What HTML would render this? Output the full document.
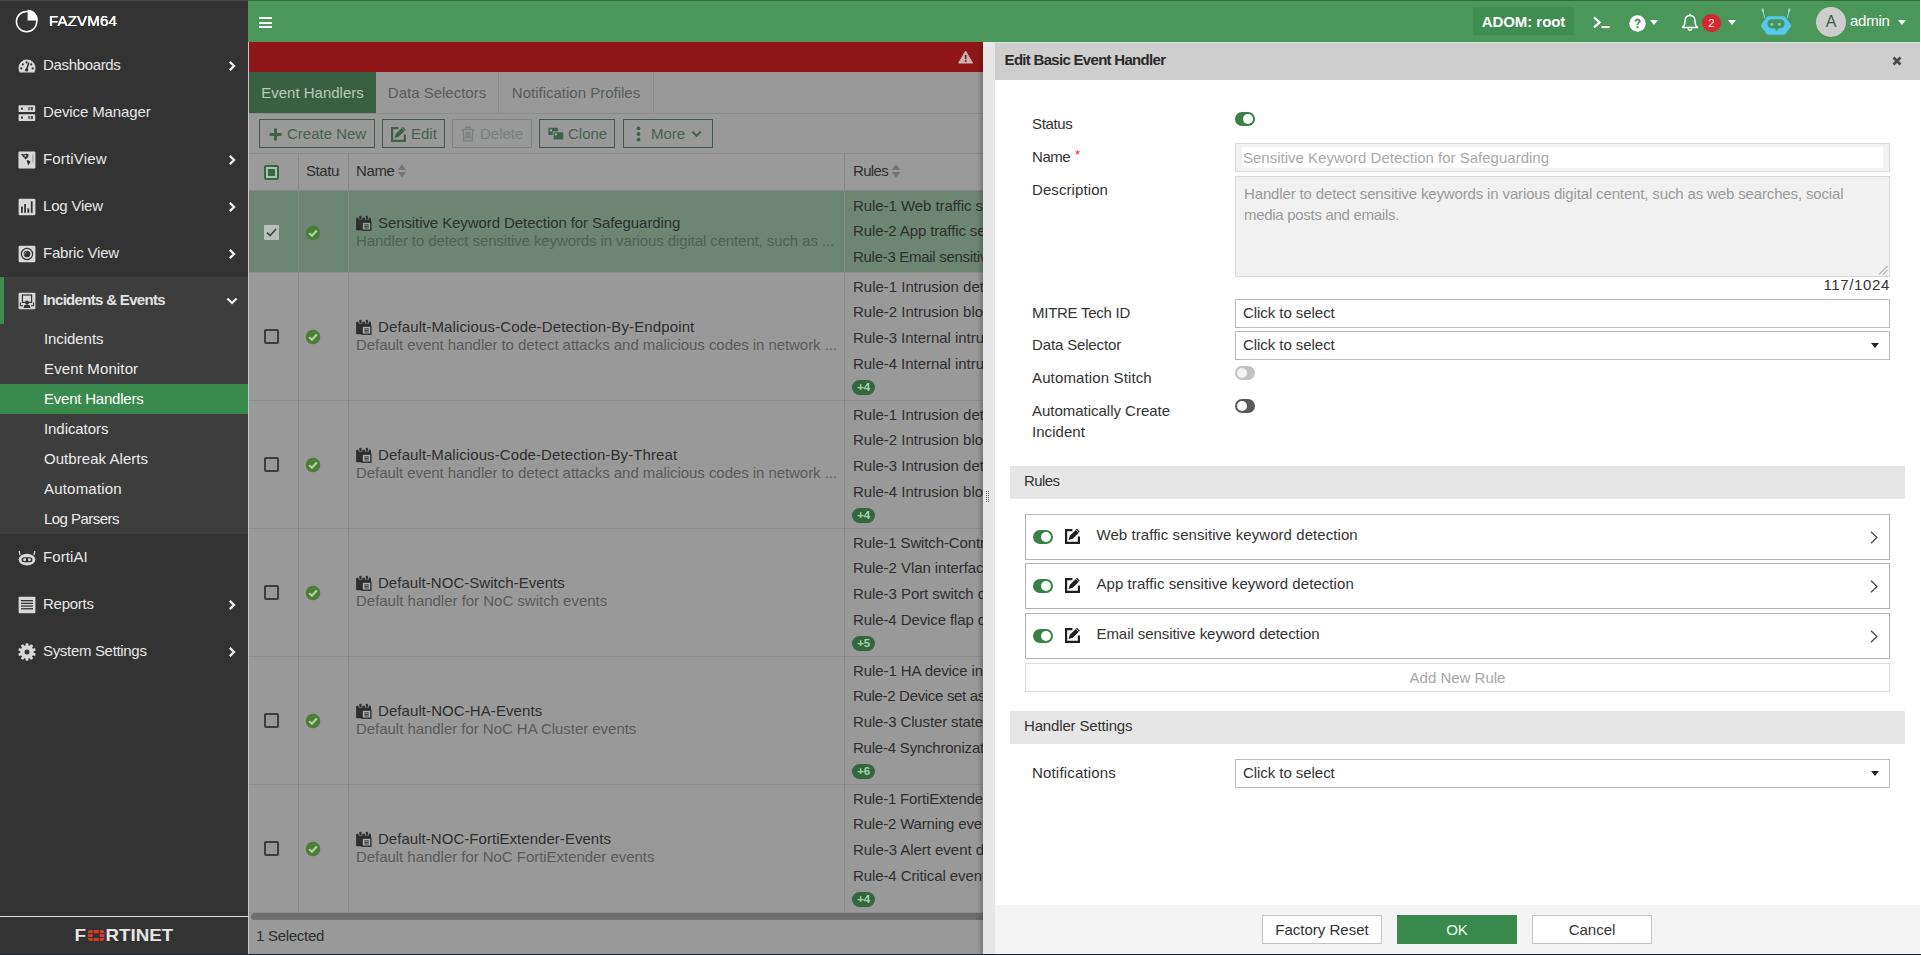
<!DOCTYPE html>
<html lang="en">
<head>
<meta charset="utf-8">
<title>FortiAnalyzer - Edit Basic Event Handler</title>
<style>
*{box-sizing:border-box;margin:0;padding:0}
html,body{width:1921px;height:955px;overflow:hidden;background:#fff}
body{font-family:"Liberation Sans",sans-serif;font-size:15px;color:#333;position:relative}
.abs{position:absolute}
.lato{font-family:"Liberation Sans",sans-serif;letter-spacing:-0.35px}
svg{display:block}

/* ---------- sidebar ---------- */
#side{position:absolute;left:0;top:0;width:248px;height:955px;background:#333333;color:#ededed}
#side .brand{position:absolute;left:0;top:0;width:248px;height:42px}
#side .brand .t{position:absolute;left:49px;top:11px;font-size:15px;line-height:20px;color:#fff;letter-spacing:0.19px;font-weight:400;text-shadow:0 0 .5px #fff,0 0 .5px #fff}
.mi{position:absolute;left:0;width:248px;height:47px}
.mi .ic{position:absolute;left:17.6px;top:15.4px;width:18px;height:18px}
.mi .t{position:absolute;left:43px;top:14px;font-size:15px;line-height:18px;color:#e6e6e6;letter-spacing:-0.45px;white-space:nowrap}
.mi .ch{position:absolute;left:227px;top:18px;width:10px;height:12px}
.mi.act{background:#3d3d3d}
.mi.act:before{content:"";position:absolute;left:0;top:0;width:4px;height:47px;background:#3d8b4f}
.mi.act .t{font-weight:bold;letter-spacing:-0.75px;color:#e2e2e2}
#sub{position:absolute;left:0;top:324px;width:248px;height:210px;background:#3d3d3d}
.si{position:absolute;left:0;width:248px;height:30px}
.si .t{position:absolute;left:44px;top:6px;font-size:15px;line-height:18px;color:#ececec;letter-spacing:-0.45px;white-space:nowrap}
.si.act{background:#3a8a4d}
.si.act .t{color:#fff}
#sfoot{position:absolute;left:0;top:916px;width:248px;height:39px;border-top:1px solid #dcdcdc;background:#333}

/* ---------- top bar ---------- */
#top{position:absolute;left:248px;top:0;width:1672px;height:42px;background:#4b9659}
#topline{position:absolute;left:0;top:0;width:1921px;height:1px;background:linear-gradient(90deg,#474747 0,#474747 248px,#2f6a3e 248px,#2f6a3e 1920px,#fff 1920px)}


#top .ham{position:absolute;left:11px;top:16px;width:13px;height:12px}
#top .ham i{position:absolute;left:0;width:13px;height:2.2px;background:#fff;border-radius:.5px}
#adom{position:absolute;left:1225px;top:7px;width:101px;height:28px;background:#408d51;color:#fff;font-weight:bold;font-size:15px;line-height:29.5px;text-align:center;letter-spacing:-0.06px}
#top .user{position:absolute;left:1602px;top:12px;font-size:15px;line-height:18px;color:#fff;letter-spacing:-0.23px}
#top .av{position:absolute;left:1568px;top:7px;width:30px;height:30px;border-radius:50%;background:#cdcdcd;color:#3c5c45;font-size:16px;line-height:30px;text-align:center}
#top .bdg{position:absolute;left:1454px;top:14px;width:19px;height:18px;border-radius:9px;background:#d9272e;color:#fff;font-size:11.5px;line-height:18px;text-align:center}
.car{position:absolute;width:0;height:0;border-left:4.6px solid transparent;border-right:4.6px solid transparent;border-top:5px solid #fff}

/* ---------- dimmed main ---------- */
#main{position:absolute;left:248px;top:42px;width:735px;height:913px;background:#999999;overflow:hidden}
#banner{position:absolute;left:1px;top:0;width:734px;height:30px;background:#8f1616}

#main .edge{position:absolute;left:0;top:0;width:1px;height:913px;background:rgba(255,255,255,.45)}
#warn{position:absolute;left:709.8px;top:8.2px;width:15.2px;height:14.2px}
#tabs{position:absolute;left:1px;top:30px;width:734px;height:42px;border-bottom:1px solid #8b8b8b}
.tab{position:absolute;top:0;height:41px;font-size:15px;line-height:41px;color:#585d5a;text-align:center;border-right:1px solid #8b8b8b;white-space:nowrap}
.tab.on{background:#396043;color:#b6ccba;border-right:none}
.btn{position:absolute;top:77px;height:29px;border:1px solid #425a49;color:#48614f;font-size:15px;line-height:27px;white-space:nowrap}
.btn span{position:absolute;top:0}
.btn.dis{border-color:#7f8481;color:#7b817d}
.btn svg{position:absolute}
#thead{position:absolute;left:1px;top:111px;width:734px;height:38px;border-top:1px solid #8a8a8a;border-bottom:1px solid #878787;background:#9a9a9a}
.vl{position:absolute;top:111px;width:1px;height:760px;background:#888}
.th{position:absolute;top:8px;font-size:15px;line-height:18px;color:#2d2d2d;white-space:nowrap}
.sort{position:absolute;margin-left:-1.5px;top:10px;width:10px;height:14px}
.row{position:absolute;left:1px;width:734px;border-bottom:1px solid #8c8c8c}
.row.sel{background:#6d8674;border-bottom-color:#8a918c}
.cb{position:absolute;left:15px;width:15px;height:15px;border:2px solid #3c3c3c;border-radius:2px}
.st{position:absolute;left:56.3px;width:16px;height:16px}
.nm{position:absolute;left:129px;font-size:15px;line-height:18px;color:#2f2f2f;white-space:nowrap}
.ds{position:absolute;left:107px;font-size:15px;line-height:18px;color:#5b5b5b;white-space:nowrap}
.row.sel .ds{color:#4c6354}
.hi{position:absolute;left:107px;width:16px;height:16px}
.rl{position:absolute;left:604px;font-size:15px;line-height:18px;color:#2f2f2f;white-space:nowrap}
.pb{position:absolute;left:603px;width:23px;height:15px;border-radius:8px;background:#33683f;color:#a9cdb1;font-size:11.5px;font-weight:bold;line-height:15px;text-align:center;letter-spacing:-0.4px}
#hsb{position:absolute;left:3px;top:871px;width:740px;height:7px;border-radius:4px;background:#6e6e6e}
#selc{position:absolute;left:8px;top:885px;font-size:15px;line-height:18px;color:#303030;letter-spacing:-0.29px}

/* ---------- panel ---------- */
#grip{position:absolute;left:983px;top:42px;width:12px;height:913px;background:#e7e7e7;box-shadow:-2px 0 5px rgba(0,0,0,.28);clip-path:inset(0 0 0 -10px)}
#panel{position:absolute;left:995px;top:42px;width:925px;height:913px;background:#fff}
#phead{position:absolute;left:0;top:0;width:925px;height:38px;background:#cecece;border-top:1px solid #d6e6d9}
#pfoot{position:absolute;left:0;top:863px;width:925px;height:50px;background:#f4f4f4}

#grip .dots{position:absolute;left:3px;top:449px;width:3px;height:11px}
#ptitle{position:absolute;left:9.6px;top:8px;font-size:15px;line-height:18px;font-weight:bold;color:#2b2b2b;white-space:nowrap}
#pclose{position:absolute;left:896.5px;top:13px;width:10px;height:10px}
.lb{position:absolute;left:37px;font-size:15px;line-height:21px;color:#333;white-space:nowrap}
.tg{position:absolute;left:240px;width:20px;height:14px;border-radius:7px}
.tg i{position:absolute;top:1.8px;width:10.4px;height:10.4px;border-radius:50%;background:#fff}
.tg.on{background:#3a8148}.tg.on i{left:7.8px}
.tg.off{background:#5a5a5a}.tg.off i{left:1.6px}
.tg.dis{background:#c2c2c2}.tg.dis i{left:1.6px;background:#f2f2f2}
.fld{position:absolute;left:240px;width:655px;height:29px;border:1px solid #bcbcbc;background:#fff;font-size:15px;line-height:25px;color:#333;padding-left:7px;white-space:nowrap}
.fld .dn{position:absolute;right:10px;top:11px;width:0;height:0;border-left:4.5px solid transparent;border-right:4.5px solid transparent;border-top:5px solid #222}
.sec{position:absolute;left:15px;width:895px;height:33px;background:#e6e6e6;font-size:15px;line-height:29px;color:#333;padding-left:14px}
.rule{position:absolute;left:30px;width:865px;height:46px;border:1px solid #b4b4b4;background:#fff}
.rule .tg{left:7px;top:15px}
.rule .ed{position:absolute;left:39px;top:14.2px;width:15px;height:15px}
.rule .rt{position:absolute;left:70.5px;top:11px;font-size:15px;line-height:18px;color:#333;white-space:nowrap}
.rule .go{position:absolute;left:844px;top:15.5px;width:8px;height:13px}
.pbtn{position:absolute;top:873px;width:120px;height:29px;border:1px solid #c4c4c4;background:#fff;font-size:15px;line-height:27px;text-align:center;color:#333}
.pbtn.ok{background:#3a8a4d;border-color:#3a8a4d;color:#e9f6ec}
#botline{position:absolute;left:0;top:954px;width:1921px;height:1px;background:#1c262d}
</style>
</head>
<body>

<!-- ================= SIDEBAR ================= -->
<div id="side">
  <div class="brand"><svg class="abs" style="left:15px;top:9px;width:24px;height:24px" viewBox="0 0 24 24"><circle cx="11.6" cy="12.6" r="10.2" fill="none" stroke="#fff" stroke-width="1.5"/><path d="M12.6 0.8 A10.6 10.6 0 0 1 23.2 11.4 L12.6 11.4 Z" fill="#fff"/></svg><span class="t">FAZVM64</span></div>
  <div class="mi" style="top:42px"><svg class="ic" viewBox="0 0 18 18"><path d="M9 2.6 A8.5 8.5 0 0 0 0.5 11.1 C0.5 12.7 0.9 14.2 1.7 15.4 L16.3 15.4 C17.1 14.2 17.5 12.7 17.5 11.1 A8.5 8.5 0 0 0 9 2.6 Z" fill="#d8d8d8"/><circle cx="3.3" cy="11.4" r="1.05" fill="#333"/><circle cx="4.8" cy="7.4" r="1.05" fill="#333"/><circle cx="8.6" cy="5.4" r="1.05" fill="#333"/><circle cx="13.2" cy="7.4" r="1.05" fill="#333"/><circle cx="14.7" cy="11.4" r="1.05" fill="#333"/><path d="M8.6 12.8 L10.6 6.2" stroke="#333" stroke-width="1.5" stroke-linecap="round"/><circle cx="8.6" cy="12.9" r="1.7" fill="#333"/></svg><span class="t" style="letter-spacing:-0.34px">Dashboards</span><svg class="ch" viewBox="0 0 10 12"><path d="M2.8 1.9 L7 6 L2.8 10.1" fill="none" stroke="#f0f0f0" stroke-width="2.3" stroke-linejoin="miter"/></svg></div>
  <div class="mi" style="top:89px"><svg class="ic" viewBox="0 0 18 18"><rect x="0.6" y="1.2" width="16.6" height="6.8" rx="0.8" fill="#d8d8d8"/><rect x="0.6" y="10.2" width="16.6" height="6.8" rx="0.8" fill="#d8d8d8"/><rect x="3" y="3.6" width="2" height="2" fill="#333"/><rect x="3" y="12.6" width="2" height="2" fill="#333"/><rect x="10.4" y="3" width="1.2" height="3.2" fill="#333"/><rect x="12.6" y="3" width="2.4" height="3.2" fill="#555"/><rect x="10.4" y="12" width="1.2" height="3.2" fill="#333"/><rect x="12.6" y="12" width="2.4" height="3.2" fill="#555"/></svg><span class="t" style="letter-spacing:-0.12px">Device Manager</span></div>
  <div class="mi" style="top:136px"><svg class="ic" viewBox="0 0 18 18"><rect x="0.4" y="0.6" width="17" height="16.8" rx="1.2" fill="#d8d8d8"/><path d="M2.4 3.8 L4.6 3 L6 3.6 L8.4 2.6 L10.6 3.6 L10.2 6 L8.8 7.6 L7.2 8.4 L6.4 6.8 L5 6 L4.4 4.6 Z M9 9 L11 9.4 L12.6 10.8 L11.4 12.8 L10.2 14.6 L9.6 12.4 L8.8 10.6 Z" fill="#333"/><circle cx="7.4" cy="4.8" r="0.9" fill="#d8d8d8"/><rect x="14.4" y="3.4" width="1" height="8" fill="#9a9a9a"/></svg><span class="t" style="letter-spacing:0.17px">FortiView</span><svg class="ch" viewBox="0 0 10 12"><path d="M2.8 1.9 L7 6 L2.8 10.1" fill="none" stroke="#f0f0f0" stroke-width="2.3" stroke-linejoin="miter"/></svg></div>
  <div class="mi" style="top:183px"><svg class="ic" viewBox="0 0 18 18"><rect x="0.6" y="0.8" width="16.8" height="16.4" rx="1.2" fill="#d8d8d8"/><rect x="3" y="8.6" width="1.8" height="6.2" fill="#333"/><rect x="6.2" y="6" width="1.8" height="8.8" fill="#333"/><rect x="9.4" y="10.4" width="1.8" height="4.4" fill="#333"/><rect x="12.8" y="3.2" width="1.8" height="11.6" fill="#333"/></svg><span class="t" style="letter-spacing:-0.19px">Log View</span><svg class="ch" viewBox="0 0 10 12"><path d="M2.8 1.9 L7 6 L2.8 10.1" fill="none" stroke="#f0f0f0" stroke-width="2.3" stroke-linejoin="miter"/></svg></div>
  <div class="mi" style="top:230px"><svg class="ic" viewBox="0 0 18 18"><rect x="0.6" y="0.8" width="16.8" height="16.4" rx="1.2" fill="#d8d8d8"/><circle cx="9" cy="9" r="5.6" fill="none" stroke="#333" stroke-width="1.2"/><circle cx="9" cy="9" r="3.3" fill="#333"/><path d="M9.6 6.2 A3 3 0 0 0 7 10.8 A4.4 4.4 0 0 1 9.6 6.2Z" fill="#d8d8d8"/></svg><span class="t" style="letter-spacing:-0.19px">Fabric View</span><svg class="ch" viewBox="0 0 10 12"><path d="M2.8 1.9 L7 6 L2.8 10.1" fill="none" stroke="#f0f0f0" stroke-width="2.3" stroke-linejoin="miter"/></svg></div>
  <div class="mi act" style="top:277px"><svg class="ic" viewBox="0 0 18 18"><rect x="0.6" y="0.8" width="16.8" height="16.4" rx="1.2" fill="#d8d8d8"/><rect x="4.4" y="3" width="9.2" height="7.4" fill="none" stroke="#333" stroke-width="1.2"/><circle cx="9" cy="10.6" r="2" fill="#333"/><path d="M5.6 16 C5.6 13.4 7 12.6 9 12.6 C11 12.6 12.4 13.4 12.4 16Z" fill="#333"/><path d="M2.4 10.4 v3.4 h2.6 M15.6 10.4 v3.4 h-2.6" fill="none" stroke="#333" stroke-width="1.1"/></svg><span class="t" style="letter-spacing:-0.68px">Incidents &amp; Events</span><svg class="ch" viewBox="0 0 12 10" style="left:226px;top:19px;width:12px;height:10px"><path d="M1.4 2.4 L6 7 L10.6 2.4" fill="none" stroke="#f0f0f0" stroke-width="2.1"/></svg></div>
  <div class="mi" style="top:534px"><svg class="ic" viewBox="0 0 18 18"><path d="M1.2 2 L2 6.2 M16.8 2 L16 6.2" stroke="#d8d8d8" stroke-width="1.3" fill="none"/><ellipse cx="9" cy="10.6" rx="8.4" ry="5.8" fill="#d8d8d8"/><rect x="3.6" y="8.2" width="10.8" height="5" rx="2.5" fill="#333"/><circle cx="6.6" cy="10.7" r="1.45" fill="#d8d8d8"/><circle cx="11.4" cy="10.7" r="1.45" fill="#d8d8d8"/></svg><span class="t" style="letter-spacing:0.09px">FortiAI</span></div>
  <div class="mi" style="top:581px"><svg class="ic" viewBox="0 0 18 18"><rect x="0.6" y="0.8" width="16.8" height="16.4" rx="0.8" fill="#d8d8d8"/><rect x="3" y="4" width="12" height="1.3" fill="#333"/><rect x="3" y="6.7" width="12" height="1.3" fill="#333"/><rect x="3" y="9.4" width="12" height="1.3" fill="#333"/><rect x="3" y="12.1" width="12" height="1.3" fill="#333"/></svg><span class="t" style="letter-spacing:-0.25px">Reports</span><svg class="ch" viewBox="0 0 10 12"><path d="M2.8 1.9 L7 6 L2.8 10.1" fill="none" stroke="#f0f0f0" stroke-width="2.3" stroke-linejoin="miter"/></svg></div>
  <div class="mi" style="top:628px"><svg class="ic" viewBox="0 0 18 18"><g fill="#d8d8d8"><circle cx="9" cy="9" r="6.7"/><rect x="7.6" y="0.2" width="2.8" height="4" rx="0.7" transform="rotate(0 9 9)"/><rect x="7.6" y="0.2" width="2.8" height="4" rx="0.7" transform="rotate(36 9 9)"/><rect x="7.6" y="0.2" width="2.8" height="4" rx="0.7" transform="rotate(72 9 9)"/><rect x="7.6" y="0.2" width="2.8" height="4" rx="0.7" transform="rotate(108 9 9)"/><rect x="7.6" y="0.2" width="2.8" height="4" rx="0.7" transform="rotate(144 9 9)"/><rect x="7.6" y="0.2" width="2.8" height="4" rx="0.7" transform="rotate(180 9 9)"/><rect x="7.6" y="0.2" width="2.8" height="4" rx="0.7" transform="rotate(216 9 9)"/><rect x="7.6" y="0.2" width="2.8" height="4" rx="0.7" transform="rotate(252 9 9)"/><rect x="7.6" y="0.2" width="2.8" height="4" rx="0.7" transform="rotate(288 9 9)"/><rect x="7.6" y="0.2" width="2.8" height="4" rx="0.7" transform="rotate(324 9 9)"/></g><circle cx="9" cy="9" r="2.5" fill="#333"/></svg><span class="t" style="letter-spacing:-0.32px">System Settings</span><svg class="ch" viewBox="0 0 10 12"><path d="M2.8 1.9 L7 6 L2.8 10.1" fill="none" stroke="#f0f0f0" stroke-width="2.3" stroke-linejoin="miter"/></svg></div>
  <div id="sub">
    <div class="si" style="top:0px"><span class="t" style="letter-spacing:-0.07px">Incidents</span></div>
    <div class="si" style="top:30px"><span class="t" style="letter-spacing:0.13px">Event Monitor</span></div>
    <div class="si act" style="top:60px"><span class="t" style="letter-spacing:-0.22px">Event Handlers</span></div>
    <div class="si" style="top:90px"><span class="t" style="letter-spacing:-0.07px">Indicators</span></div>
    <div class="si" style="top:120px"><span class="t" style="letter-spacing:0.05px">Outbreak Alerts</span></div>
    <div class="si" style="top:150px"><span class="t" style="letter-spacing:0.2px">Automation</span></div>
    <div class="si" style="top:180px"><span class="t" style="letter-spacing:-0.53px">Log Parsers</span></div>
  </div>
  <div id="sfoot"><svg class="abs" style="left:70px;top:9px;width:110px;height:20px" viewBox="0 0 110 20"><text x="4.6" y="15" font-family="Liberation Sans, sans-serif" font-weight="bold" font-size="16.3" fill="#e6e6e6" textLength="11.6" lengthAdjust="spacingAndGlyphs">F</text><g fill="#da3a2c" transform="translate(0,-1)"><path d="M18 7.4 a2.4 2.4 0 0 1 2.4 -2.4 H22.6 V8.2 H18Z"/><rect x="23.6" y="5" width="5.2" height="3.2"/><path d="M29.8 5 H32 a2.4 2.4 0 0 1 2.4 2.4 V8.2 H29.8Z"/><rect x="18" y="9.1" width="4.6" height="2.9"/><rect x="29.8" y="9.1" width="4.6" height="2.9"/><path d="M18 12.9 H22.6 V16 H20.4 a2.4 2.4 0 0 1 -2.4 -2.4Z"/><rect x="23.6" y="12.9" width="5.2" height="3.1"/><path d="M29.8 12.9 H34.4 V13.6 a2.4 2.4 0 0 1 -2.4 2.4 H29.8Z"/></g><text x="35.6" y="15" font-family="Liberation Sans, sans-serif" font-weight="bold" font-size="16.3" fill="#e6e6e6" textLength="67.6" lengthAdjust="spacingAndGlyphs">RTINET</text></svg></div>
</div>

<!-- ================= TOP BAR ================= -->
<div id="top">
  <div class="ham"><i style="top:1px"></i><i style="top:5.6px"></i><i style="top:10.2px"></i></div>
  <div id="adom">ADOM: root</div>
  <svg class="abs" style="left:1344px;top:15px;width:19px;height:15px" viewBox="0 0 19 15"><path d="M2 2.4 L7.6 7.4 L2 12.4" fill="none" stroke="#fff" stroke-width="2.1"/><rect x="9.6" y="11" width="8" height="2.1" fill="#fff"/></svg>
  <svg class="abs" style="left:1381px;top:14.5px;width:17px;height:17px" viewBox="0 0 17 17"><circle cx="8.5" cy="8.5" r="8.2" fill="#fff"/><path d="M5.6 6.5 C5.6 4.6 7 3.6 8.6 3.6 C10.3 3.6 11.6 4.7 11.6 6.2 C11.6 8.2 9.4 8.3 9.4 10.2 L7.6 10.2 C7.6 8 9.5 7.8 9.5 6.4 C9.5 5.8 9.1 5.4 8.5 5.4 C7.9 5.4 7.5 5.8 7.5 6.5 Z M7.5 11.3 h2 v2 h-2z" fill="#4b9659"/></svg>
  <div class="car" style="left:1401.5px;top:19.5px"></div>
  <svg class="abs" style="left:1433px;top:13px;width:18px;height:19px" viewBox="0 0 18 19"><path d="M9 1.2 L9 2.6 M9 2.6 C5.6 2.6 4 5.2 4 8.4 C4 11.6 3 13.2 1.6 14.4 L16.4 14.4 C15 13.2 14 11.6 14 8.4 C14 5.2 12.4 2.6 9 2.6 Z" fill="none" stroke="#fff" stroke-width="1.5" stroke-linejoin="round" stroke-linecap="round"/><path d="M7.2 16 A1.9 1.9 0 0 0 10.8 16" fill="none" stroke="#fff" stroke-width="1.4" stroke-linecap="round"/></svg>
  <div class="bdg">2</div>
  <div class="car" style="left:1480px;top:19.5px"></div>
  <svg class="abs" style="left:1511px;top:8px;width:34px;height:28px" viewBox="0 0 34 28"><path d="M3.6 1 L5.6 10 M30.4 1 L28.4 10" stroke="#7fd6d6" stroke-width="1.1" fill="none"/><path d="M3.5 0.6 L4.1 4 M30.5 0.6 L29.9 4" stroke="#8adcd8" stroke-width="1.9" fill="none"/><path d="M4.6 17.5 L9.6 10.8 L24.4 10.8 L29.4 17.5 L24.4 24.2 L9.6 24.2 Z" fill="#55c8ec" stroke="#55c8ec" stroke-width="5.2" stroke-linejoin="round"/><rect x="8.4" y="11.3" width="17.2" height="9" rx="4.5" fill="#46955a"/><path d="M15.6 19.6 L20.2 19.6 L17.2 23.2 Z" fill="#46955a"/><circle cx="12.9" cy="16.3" r="1.4" fill="#7fd2c4"/><circle cx="20.4" cy="16.3" r="1.4" fill="#7fd2c4"/></svg>
  <div class="av">A</div>
  <div class="user">admin</div>
  <div class="car" style="left:1649.5px;top:19.5px"></div>
</div>

<!-- ================= MAIN (dimmed) ================= -->
<div id="main">
  <div id="banner"></div>
  <svg id="warn" viewBox="0 0 17 15"><path d="M8.5 0.8 L16.4 14.2 H0.6 Z" fill="#c9b3b3" stroke="#c9b3b3" stroke-width="1" stroke-linejoin="round"/><rect x="7.6" y="5" width="1.9" height="4.8" fill="#8f1616"/><rect x="7.6" y="10.8" width="1.9" height="1.9" fill="#8f1616"/></svg>
  <div id="tabs"><div class="tab on" style="left:0;width:127px">Event Handlers</div><div class="tab" style="left:127px;width:123px">Data Selectors</div><div class="tab" style="left:250px;width:155px">Notification Profiles</div></div>
  <div class="btn" style="left:11px;width:116px"><svg style="left:9px;top:8px;width:13px;height:13px" viewBox="0 0 13 13"><path d="M5 0.6 h3 v4.4 h4.4 v3 h-4.4 v4.4 h-3 v-4.4 h-4.4 v-3 h4.4z" fill="#3d6247"/></svg><span style="left:27px">Create New</span></div><div class="btn" style="left:134px;width:63px"><svg style="left:8px;top:6.5px;width:15px;height:15px;overflow:visible" viewBox="0 0 15 15"><path d="M7.4 1.1 H1.1 V13.9 H13.9 V7.6" fill="none" stroke="#3d6247" stroke-width="2.2"/><path d="M4.85 6.85 L11.95 -0.25 L14.85 2.65 L7.75 9.75 L3.5 11.1 Z" fill="#3d6247"/><path d="M11 0.9 L13.8 3.7" stroke="#999" stroke-width="0.7"/></svg><span style="left:28px">Edit</span></div><div class="btn dis" style="left:204px;width:80px"><svg style="left:8px;top:6px;width:14px;height:16px" viewBox="0 0 14 16"><path d="M0.8 3.4 H13.2 M4.8 3.2 V1.2 H9.2 V3.2 M2.2 3.6 L2.9 14.8 H11.1 L11.8 3.6 M5.1 5.8 V12.6 M7 5.8 V12.6 M8.9 5.8 V12.6" fill="none" stroke="#7a807c" stroke-width="1.35"/></svg><span style="left:27px">Delete</span></div><div class="btn" style="left:291px;width:76px"><svg style="left:8px;top:7px;width:17px;height:14px" viewBox="0 0 17 14"><rect x="0.4" y="0.8" width="9.6" height="7.2" fill="#3d6247"/><rect x="1.8" y="2.4" width="2.2" height="2" fill="#a4aea7"/><rect x="5.2" y="4.8" width="10.6" height="8.2" fill="#3d6247" stroke="#999" stroke-width="1"/><rect x="6.8" y="6.4" width="2.2" height="2" fill="#a4aea7"/></svg><span style="left:28px">Clone</span></div><div class="btn" style="left:375px;width:90px"><svg style="left:12px;top:6px;width:5px;height:16px" viewBox="0 0 5 16"><circle cx="2.5" cy="2.4" r="1.9" fill="#3d6247"/><circle cx="2.5" cy="8" r="1.9" fill="#3d6247"/><circle cx="2.5" cy="13.6" r="1.9" fill="#3d6247"/></svg><svg style="left:67px;top:9.5px;width:11px;height:8px" viewBox="0 0 11 8"><path d="M1.2 1.6 L5.5 5.8 L9.8 1.6" fill="none" stroke="#3d6247" stroke-width="2"/></svg><span style="left:27px">More</span></div>
  <div id="thead"><div class="abs" style="left:15px;top:11px;width:15px;height:15px;border:2px solid #3a6645;border-radius:2px;background:#a7c2ae"><div class="abs" style="left:2px;top:2px;width:7px;height:7px;background:#3a6645"></div></div>
  <span class="th" style="left:57px;letter-spacing:-0.42px;width:34px;overflow:hidden">Status</span><span class="th" style="left:107px;letter-spacing:-0.38px">Name</span><svg class="sort" style="left:149.5px" viewBox="0 0 10 14"><path d="M5 0.6 L9.4 6 H0.6 Z M5 13.4 L9.4 8 H0.6 Z" fill="#757575"/></svg><span class="th" style="left:604px;letter-spacing:-0.67px">Rules</span><svg class="sort" style="left:643.5px" viewBox="0 0 10 14"><path d="M5 0.6 L9.4 6 H0.6 Z M5 13.4 L9.4 8 H0.6 Z" fill="#757575"/></svg></div>
  <div class="row sel" style="top:149px;height:82px"><div class="cb" style="top:33.8px;border:none;background:#b9bfbb;border-radius:1px"><svg viewBox="0 0 15 15" style="width:15px;height:15px"><path d="M3 7.6 L6.2 10.6 L12.2 3.8" fill="none" stroke="#3b4a40" stroke-width="1.6"/></svg></div><svg class="st" style="top:33.7px" viewBox="0 0 16 16"><circle cx="8" cy="8" r="7.3" fill="#4a7f37"/><path d="M4.2 8.2 L7 10.8 L11.8 5.6" fill="none" stroke="#b3cfa8" stroke-width="2.2"/></svg><svg class="hi" style="top:24.1px" viewBox="0 0 16 16"><rect x="0.1" y="2.8" width="14.9" height="12.5" rx="0.6" fill="#2e2e2e"/><rect x="2.5" y="2.2" width="3.8" height="2.4" fill="#6d8674"/><rect x="9" y="2.2" width="3.8" height="2.4" fill="#6d8674"/><rect x="3.4" y="0.8" width="2" height="3.4" rx="0.5" fill="#2e2e2e"/><rect x="9.9" y="0.8" width="2" height="3.4" rx="0.5" fill="#2e2e2e"/><rect x="6.6" y="7.6" width="7.8" height="7.1" fill="#8fa596"/><rect x="6" y="7" width="9" height="8.3" fill="none" stroke="#2e2e2e" stroke-width="1.1"/><path d="M8.4 9.8 H12.8 M8.4 11.4 H12.8 M8.4 13 H12.8" stroke="#2e2e2e" stroke-width="0.9"/></svg><span class="nm" style="top:22.8px;letter-spacing:-0.084px">Sensitive Keyword Detection for Safeguarding</span><span class="ds" style="top:41.0px;letter-spacing:-0.106px">Handler to detect sensitive keywords in various digital centent, such as ...</span><span class="rl" style="top:5.8px;letter-spacing:-0.06px">Rule-1 Web traffic sensitive keyword detection</span><span class="rl" style="top:31.4px;letter-spacing:-0.11px">Rule-2 App traffic sensitive keyword detection</span><span class="rl" style="top:57.0px;letter-spacing:-0.29px">Rule-3 Email sensitive keyword detection</span></div>
<div class="row" style="top:231px;height:128px"><div class="cb" style="top:55.7px"></div><svg class="st" style="top:55.6px" viewBox="0 0 16 16"><circle cx="8" cy="8" r="7.3" fill="#4a7f37"/><path d="M4.2 8.2 L7 10.8 L11.8 5.6" fill="none" stroke="#b3cfa8" stroke-width="2.2"/></svg><svg class="hi" style="top:46.0px" viewBox="0 0 16 16"><rect x="0.1" y="2.8" width="14.9" height="12.5" rx="0.6" fill="#2e2e2e"/><rect x="2.5" y="2.2" width="3.8" height="2.4" fill="#999999"/><rect x="9" y="2.2" width="3.8" height="2.4" fill="#999999"/><rect x="3.4" y="0.8" width="2" height="3.4" rx="0.5" fill="#2e2e2e"/><rect x="9.9" y="0.8" width="2" height="3.4" rx="0.5" fill="#2e2e2e"/><rect x="6.6" y="7.6" width="7.8" height="7.1" fill="#b0b0b0"/><rect x="6" y="7" width="9" height="8.3" fill="none" stroke="#2e2e2e" stroke-width="1.1"/><path d="M8.4 9.8 H12.8 M8.4 11.4 H12.8 M8.4 13 H12.8" stroke="#2e2e2e" stroke-width="0.9"/></svg><span class="nm" style="top:44.7px;letter-spacing:0.123px">Default-Malicious-Code-Detection-By-Endpoint</span><span class="ds" style="top:62.9px;letter-spacing:-0.058px">Default event handler to detect attacks and malicious codes in network ...</span><span class="rl" style="top:4.8px">Rule-1 Intrusion detected at endpoint</span><span class="rl" style="top:30.4px">Rule-2 Intrusion blocked at endpoint</span><span class="rl" style="top:56.0px;letter-spacing:-0.035px">Rule-3 Internal intrusion detected</span><span class="rl" style="top:81.6px;letter-spacing:-0.035px">Rule-4 Internal intrusion blocked</span><div class="pb" style="top:106.5px">+4</div></div>
<div class="row" style="top:359px;height:128px"><div class="cb" style="top:55.7px"></div><svg class="st" style="top:55.6px" viewBox="0 0 16 16"><circle cx="8" cy="8" r="7.3" fill="#4a7f37"/><path d="M4.2 8.2 L7 10.8 L11.8 5.6" fill="none" stroke="#b3cfa8" stroke-width="2.2"/></svg><svg class="hi" style="top:46.0px" viewBox="0 0 16 16"><rect x="0.1" y="2.8" width="14.9" height="12.5" rx="0.6" fill="#2e2e2e"/><rect x="2.5" y="2.2" width="3.8" height="2.4" fill="#999999"/><rect x="9" y="2.2" width="3.8" height="2.4" fill="#999999"/><rect x="3.4" y="0.8" width="2" height="3.4" rx="0.5" fill="#2e2e2e"/><rect x="9.9" y="0.8" width="2" height="3.4" rx="0.5" fill="#2e2e2e"/><rect x="6.6" y="7.6" width="7.8" height="7.1" fill="#b0b0b0"/><rect x="6" y="7" width="9" height="8.3" fill="none" stroke="#2e2e2e" stroke-width="1.1"/><path d="M8.4 9.8 H12.8 M8.4 11.4 H12.8 M8.4 13 H12.8" stroke="#2e2e2e" stroke-width="0.9"/></svg><span class="nm" style="top:44.7px;letter-spacing:0.097px">Default-Malicious-Code-Detection-By-Threat</span><span class="ds" style="top:62.9px;letter-spacing:-0.058px">Default event handler to detect attacks and malicious codes in network ...</span><span class="rl" style="top:4.8px">Rule-1 Intrusion detected by threat</span><span class="rl" style="top:30.4px">Rule-2 Intrusion blocked by threat</span><span class="rl" style="top:56.0px">Rule-3 Intrusion detected internal</span><span class="rl" style="top:81.6px">Rule-4 Intrusion blocked internal</span><div class="pb" style="top:106.5px">+4</div></div>
<div class="row" style="top:487px;height:128px"><div class="cb" style="top:55.7px"></div><svg class="st" style="top:55.6px" viewBox="0 0 16 16"><circle cx="8" cy="8" r="7.3" fill="#4a7f37"/><path d="M4.2 8.2 L7 10.8 L11.8 5.6" fill="none" stroke="#b3cfa8" stroke-width="2.2"/></svg><svg class="hi" style="top:46.0px" viewBox="0 0 16 16"><rect x="0.1" y="2.8" width="14.9" height="12.5" rx="0.6" fill="#2e2e2e"/><rect x="2.5" y="2.2" width="3.8" height="2.4" fill="#999999"/><rect x="9" y="2.2" width="3.8" height="2.4" fill="#999999"/><rect x="3.4" y="0.8" width="2" height="3.4" rx="0.5" fill="#2e2e2e"/><rect x="9.9" y="0.8" width="2" height="3.4" rx="0.5" fill="#2e2e2e"/><rect x="6.6" y="7.6" width="7.8" height="7.1" fill="#b0b0b0"/><rect x="6" y="7" width="9" height="8.3" fill="none" stroke="#2e2e2e" stroke-width="1.1"/><path d="M8.4 9.8 H12.8 M8.4 11.4 H12.8 M8.4 13 H12.8" stroke="#2e2e2e" stroke-width="0.9"/></svg><span class="nm" style="top:44.7px;letter-spacing:0.036px">Default-NOC-Switch-Events</span><span class="ds" style="top:62.9px;letter-spacing:-0.016px">Default handler for NoC switch events</span><span class="rl" style="top:4.8px;letter-spacing:-0.12px">Rule-1 Switch-Controller events</span><span class="rl" style="top:30.4px;letter-spacing:-0.06px">Rule-2 Vlan interface events</span><span class="rl" style="top:56.0px;letter-spacing:-0.06px">Rule-3 Port switch down</span><span class="rl" style="top:81.6px;letter-spacing:-0.1px">Rule-4 Device flap detected</span><div class="pb" style="top:106.5px">+5</div></div>
<div class="row" style="top:615px;height:128px"><div class="cb" style="top:55.7px"></div><svg class="st" style="top:55.6px" viewBox="0 0 16 16"><circle cx="8" cy="8" r="7.3" fill="#4a7f37"/><path d="M4.2 8.2 L7 10.8 L11.8 5.6" fill="none" stroke="#b3cfa8" stroke-width="2.2"/></svg><svg class="hi" style="top:46.0px" viewBox="0 0 16 16"><rect x="0.1" y="2.8" width="14.9" height="12.5" rx="0.6" fill="#2e2e2e"/><rect x="2.5" y="2.2" width="3.8" height="2.4" fill="#999999"/><rect x="9" y="2.2" width="3.8" height="2.4" fill="#999999"/><rect x="3.4" y="0.8" width="2" height="3.4" rx="0.5" fill="#2e2e2e"/><rect x="9.9" y="0.8" width="2" height="3.4" rx="0.5" fill="#2e2e2e"/><rect x="6.6" y="7.6" width="7.8" height="7.1" fill="#b0b0b0"/><rect x="6" y="7" width="9" height="8.3" fill="none" stroke="#2e2e2e" stroke-width="1.1"/><path d="M8.4 9.8 H12.8 M8.4 11.4 H12.8 M8.4 13 H12.8" stroke="#2e2e2e" stroke-width="0.9"/></svg><span class="nm" style="top:44.7px;letter-spacing:0.083px">Default-NOC-HA-Events</span><span class="ds" style="top:62.9px;letter-spacing:-0.037px">Default handler for NoC HA Cluster events</span><span class="rl" style="top:4.8px;letter-spacing:-0.09px">Rule-1 HA device interface failed</span><span class="rl" style="top:30.4px;letter-spacing:-0.32px">Rule-2 Device set as HA primary</span><span class="rl" style="top:56.0px;letter-spacing:-0.13px">Rule-3 Cluster state moved</span><span class="rl" style="top:81.6px;letter-spacing:-0.215px">Rule-4 Synchronization status</span><div class="pb" style="top:106.5px">+6</div></div>
<div class="row" style="top:743px;height:128px"><div class="cb" style="top:55.7px"></div><svg class="st" style="top:55.6px" viewBox="0 0 16 16"><circle cx="8" cy="8" r="7.3" fill="#4a7f37"/><path d="M4.2 8.2 L7 10.8 L11.8 5.6" fill="none" stroke="#b3cfa8" stroke-width="2.2"/></svg><svg class="hi" style="top:46.0px" viewBox="0 0 16 16"><rect x="0.1" y="2.8" width="14.9" height="12.5" rx="0.6" fill="#2e2e2e"/><rect x="2.5" y="2.2" width="3.8" height="2.4" fill="#999999"/><rect x="9" y="2.2" width="3.8" height="2.4" fill="#999999"/><rect x="3.4" y="0.8" width="2" height="3.4" rx="0.5" fill="#2e2e2e"/><rect x="9.9" y="0.8" width="2" height="3.4" rx="0.5" fill="#2e2e2e"/><rect x="6.6" y="7.6" width="7.8" height="7.1" fill="#b0b0b0"/><rect x="6" y="7" width="9" height="8.3" fill="none" stroke="#2e2e2e" stroke-width="1.1"/><path d="M8.4 9.8 H12.8 M8.4 11.4 H12.8 M8.4 13 H12.8" stroke="#2e2e2e" stroke-width="0.9"/></svg><span class="nm" style="top:44.7px;letter-spacing:0.039px">Default-NOC-FortiExtender-Events</span><span class="ds" style="top:62.9px;letter-spacing:-0.04px">Default handler for NoC FortiExtender events</span><span class="rl" style="top:4.8px;letter-spacing:-0.18px">Rule-1 FortiExtender events</span><span class="rl" style="top:30.4px;letter-spacing:-0.17px">Rule-2 Warning event detected</span><span class="rl" style="top:56.0px;letter-spacing:-0.037px">Rule-3 Alert event detected</span><span class="rl" style="top:81.6px;letter-spacing:-0.1px">Rule-4 Critical event detected</span><div class="pb" style="top:106.5px">+4</div></div>

  <div class="vl" style="left:50px"></div><div class="vl" style="left:100px"></div><div class="vl" style="left:596px"></div>
  <div id="hsb"></div>
  <div id="selc">1 Selected</div>
  <div class="edge"></div>
</div>

<!-- ================= PANEL ================= -->
<div id="grip"><svg class="dots" viewBox="0 0 3 11"><g fill="#555"><rect x="0" y="0" width="1" height="1"/><rect x="2" y="0" width="1" height="1"/><rect x="0" y="2" width="1" height="1"/><rect x="2" y="2" width="1" height="1"/><rect x="0" y="4" width="1" height="1"/><rect x="2" y="4" width="1" height="1"/><rect x="0" y="6" width="1" height="1"/><rect x="2" y="6" width="1" height="1"/><rect x="0" y="8" width="1" height="1"/><rect x="2" y="8" width="1" height="1"/><rect x="0" y="10" width="1" height="1"/><rect x="2" y="10" width="1" height="1"/></g></svg></div>
<div id="panel">
  <div id="phead"><span id="ptitle" style="letter-spacing:-0.703px">Edit Basic Event Handler</span><svg id="pclose" viewBox="0 0 10 10"><path d="M1.5 1.5 L8.5 8.5 M8.5 1.5 L1.5 8.5" stroke="#474747" stroke-width="2.6"/></svg></div>

  <span class="lb" style="top:71px;letter-spacing:-0.372px">Status</span>
  <div class="tg on" style="top:70px"><i></i></div>

  <span class="lb" style="top:104px;letter-spacing:-0.454px">Name <span style="color:#d9272e;font-size:13px;position:relative;top:-3px;left:1px">*</span></span>
  <div class="abs" style="left:240px;top:101px;width:655px;height:29px;border:1px solid #dcdcdc;background:#f2f2f2"><div class="abs" style="left:6px;top:3px;width:641px;height:21px;background:#fff;font-size:15px;line-height:21px;color:#a9a9a9;padding-left:1px;white-space:nowrap">Sensitive Keyword Detection for Safeguarding</div></div>

  <span class="lb" style="top:137px;letter-spacing:0.088px">Description</span>
  <div class="abs" style="left:240px;top:134px;width:655px;height:101px;border:1px solid #d9d9d9;background:#f1f1f1;font-size:15px;line-height:21px;color:#9a9a9a;padding:6px 0 0 8px;white-space:nowrap"><span style="letter-spacing:-0.144px">Handler to detect sensitive keywords in various digital centent, such as web searches, social</span><br><span style="letter-spacing:-0.293px">media posts and emails.</span>
    <svg class="abs" style="right:1px;bottom:1px;width:10px;height:10px" viewBox="0 0 10 10"><path d="M9.5 1 L1 9.5 M9.5 5 L5 9.5" stroke="#8a8a8a" stroke-width="1"/></svg></div>
  <span class="abs" style="right:30px;top:231.7px;font-size:15px;line-height:21px;color:#333;letter-spacing:0.631px">117/1024</span>

  <span class="lb" style="top:260px;letter-spacing:-0.263px">MITRE Tech ID</span>
  <div class="fld" style="top:257px"><span style="letter-spacing:-0.055px">Click to select</span></div>
  <span class="lb" style="top:292px;letter-spacing:-0.145px">Data Selector</span>
  <div class="fld" style="top:289px"><span style="letter-spacing:-0.055px">Click to select</span><div class="dn"></div></div>
  <span class="lb" style="top:325px;letter-spacing:0.132px">Automation Stitch</span>
  <div class="tg dis" style="top:324px"><i></i></div>
  <span class="lb" style="top:358px;letter-spacing:-0.02px">Automatically Create</span>
  <span class="lb" style="top:379px;letter-spacing:0.057px">Incident</span>
  <div class="tg off" style="top:357px"><i></i></div>

  <div class="sec" style="top:424px"><span style="letter-spacing:-0.572px">Rules</span></div>
  <div class="rule" style="top:472px"><div class="tg on"><i></i></div><svg class="ed" viewBox="0 0 15 15" style="overflow:visible"><path d="M7.4 1.1 H1.1 V13.9 H13.9 V7.6" fill="none" stroke="#1f1f1f" stroke-width="2.2"/><path d="M4.85 6.85 L11.95 -0.25 L14.85 2.65 L7.75 9.75 L3.5 11.1 Z" fill="#1f1f1f"/><path d="M11 0.9 L13.8 3.7" stroke="#fff" stroke-width="0.7"/></svg><span class="rt" style="letter-spacing:0.063px">Web traffic sensitive keyword detection</span><svg class="go" viewBox="0 0 8 13"><path d="M1 0.8 L7 6.5 L1 12.2" fill="none" stroke="#444" stroke-width="1.2"/></svg></div>
  <div class="rule" style="top:521px"><div class="tg on"><i></i></div><svg class="ed" viewBox="0 0 15 15" style="overflow:visible"><path d="M7.4 1.1 H1.1 V13.9 H13.9 V7.6" fill="none" stroke="#1f1f1f" stroke-width="2.2"/><path d="M4.85 6.85 L11.95 -0.25 L14.85 2.65 L7.75 9.75 L3.5 11.1 Z" fill="#1f1f1f"/><path d="M11 0.9 L13.8 3.7" stroke="#fff" stroke-width="0.7"/></svg><span class="rt" style="letter-spacing:0.063px">App traffic sensitive keyword detection</span><svg class="go" viewBox="0 0 8 13"><path d="M1 0.8 L7 6.5 L1 12.2" fill="none" stroke="#444" stroke-width="1.2"/></svg></div>
  <div class="rule" style="top:571px"><div class="tg on"><i></i></div><svg class="ed" viewBox="0 0 15 15" style="overflow:visible"><path d="M7.4 1.1 H1.1 V13.9 H13.9 V7.6" fill="none" stroke="#1f1f1f" stroke-width="2.2"/><path d="M4.85 6.85 L11.95 -0.25 L14.85 2.65 L7.75 9.75 L3.5 11.1 Z" fill="#1f1f1f"/><path d="M11 0.9 L13.8 3.7" stroke="#fff" stroke-width="0.7"/></svg><span class="rt" style="letter-spacing:-0.064px">Email sensitive keyword detection</span><svg class="go" viewBox="0 0 8 13"><path d="M1 0.8 L7 6.5 L1 12.2" fill="none" stroke="#444" stroke-width="1.2"/></svg></div>
  <div class="abs" style="left:30px;top:621px;width:865px;height:29px;border:1px solid #dcdcdc;background:#fff;font-size:15px;line-height:27px;color:#a6a6a6;text-align:center">Add New Rule</div>

  <div class="sec" style="top:669px"><span style="letter-spacing:-0.157px">Handler Settings</span></div>
  <span class="lb" style="top:720px;letter-spacing:0.177px">Notifications</span>
  <div class="fld" style="top:717px"><span style="letter-spacing:-0.055px">Click to select</span><div class="dn"></div></div>

  <div id="pfoot"></div>
  <div class="pbtn" style="left:267px">Factory Reset</div>
  <div class="pbtn ok" style="left:402px">OK</div>
  <div class="pbtn" style="left:537px">Cancel</div>
</div>

<div id="topline"></div>
<div id="botline"></div>
</body>
</html>
